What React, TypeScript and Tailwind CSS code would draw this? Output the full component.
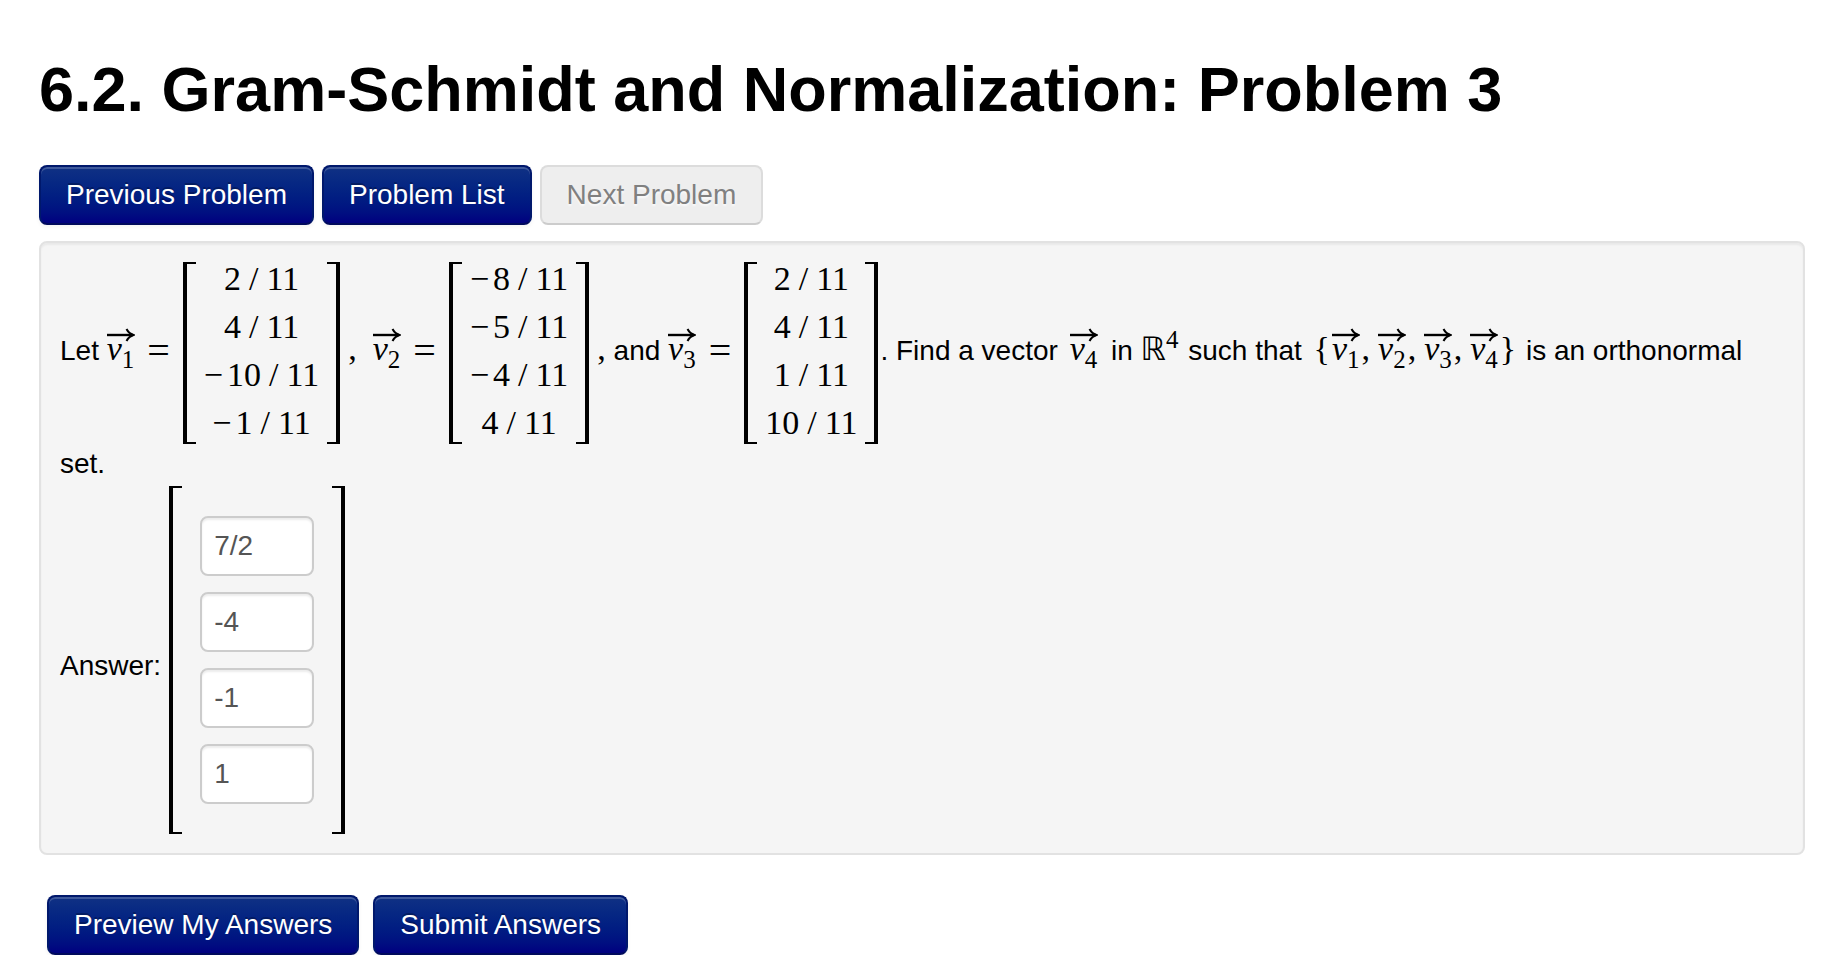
import { Fragment, type ReactNode } from "react";
import clsx from "clsx";

const v1 = ["2/11", "4/11", "−10/11", "−1/11"];
const v2 = ["−8/11", "−5/11", "−4/11", "4/11"];
const v3 = ["2/11", "4/11", "1/11", "10/11"];
const answers = ["7/2", "-4", "-1", "1"];

const btn = "inline-block rounded-lg border-2 px-[25px] py-2 text-[28px] leading-10";
const btnPrimary =
  "border-[#00186c] border-b-[#000a5c] bg-linear-to-b from-[#103184] to-[#000080] text-white shadow-[inset_0_2px_0_rgba(255,255,255,0.2),0_2px_4px_rgba(0,0,0,0.05)] text-shadow-[0_-2px_0_rgba(0,0,0,0.25)]";
const btnDisabled =
  "border-[#dcdcdc] border-b-[#cccccc] bg-[#eeeeee] text-[#808080] text-shadow-[0_2px_2px_rgba(255,255,255,0.75)]";

function Bracketed({ children, className }: { children: ReactNode; className?: string }) {
  return (
    <span className="inline-flex items-stretch align-middle">
      <span className="w-[13px] border-y-2 border-l-4 border-black" />
      <span className={clsx("flex flex-col items-center", className)}>{children}</span>
      <span className="w-[13px] border-y-2 border-r-4 border-black" />
    </span>
  );
}

function Matrix({ rows }: { rows: string[] }) {
  return (
    <Bracketed className="gap-[14px] px-2 pb-1 font-['Liberation_Serif',serif] text-[34px] leading-[34px]">
      {rows.map((row, i) => {
        const [top, bottom] = row.split("/");
        const negative = top.startsWith("−");
        return (
          <span key={i} className="whitespace-nowrap">
            {negative && <span className="mr-1">−</span>}
            {negative ? top.slice(1) : top}
            <span className="mx-2">/</span>
            {bottom}
          </span>
        );
      })}
    </Bracketed>
  );
}

function Vec({ n }: { n: number }) {
  return (
    <span className="relative inline-block font-['Liberation_Serif',serif] text-[34px] leading-none">
      <svg
        className="absolute -top-1 left-0 h-[14px] w-7"
        viewBox="0 0 28 14"
        fill="none"
        stroke="black"
        strokeWidth="2.4"
      >
        <path d="M0 7H26" />
        <path d="M19.5 1C21 4 23.500 6 26.500 7C23.500 8 21 10 19.500 13" strokeWidth="2" />
      </svg>
      <i>v</i>
      <span className="relative top-2 text-[25px] leading-none">{n}</span>
    </span>
  );
}

function Sym({ children, className }: { children: ReactNode; className?: string }) {
  return (
    <span className={clsx("font-['Liberation_Serif',serif] text-[34px] leading-none", className)}>
      {children}
    </span>
  );
}

function Equals() {
  return (
    <span className="mx-[13px] inline-block translate-y-1 font-['Liberation_Serif',serif] text-[40px] leading-none">
      =
    </span>
  );
}

export default function App() {
  return (
    <main className="bg-white pt-[49px] pr-5 pl-[39px] font-['Liberation_Sans',Arial,sans-serif] text-[28px] leading-10 text-black">
      <h1 className="text-[63px] leading-[80px] font-bold">
        6.2. Gram-Schmidt and Normalization: Problem 3
      </h1>

      <nav className="mt-9 flex gap-2">
        <a href="#previous" className={clsx(btn, btnPrimary)}>Previous Problem</a>
        <a href="#list" className={clsx(btn, btnPrimary)}>Problem List</a>
        <button type="button" disabled className={clsx(btn, btnDisabled)}>Next Problem</button>
      </nav>

      <form>
        <section className="mt-4 rounded-lg border-2 border-[#e2e2e2] bg-[#f5f5f5] p-[19px] shadow-[inset_0_2px_2px_rgba(0,0,0,0.05)]">
          <div>
            <span>Let </span>
            <Vec n={1} />
            <Equals />
            <Matrix rows={v1} />
            <Sym className="mr-4 ml-2">,</Sym>
            <Vec n={2} />
            <Equals />
            <Matrix rows={v2} />
            <Sym className="ml-2">,</Sym>
            <span> and </span>
            <Vec n={3} />
            <Equals />
            <Matrix rows={v3} />
            <span className="mr-1 ml-[2px]">. Find a vector </span>
            <Vec n={4} />
            <span className="ml-[6px]"> in </span>
            <span className="font-['DejaVu_Sans',sans-serif] text-[32px] leading-none">ℝ</span>
            <sup className="relative -top-3 align-baseline font-['Liberation_Serif',serif] text-[25px] leading-none">4</sup>
            <span className="mr-1 ml-[2px]"> such that </span>
            <Sym className="mr-[2px]">{"{"}</Sym>
            {[1, 2, 3, 4].map((n) => (
              <Fragment key={n}>
                <Vec n={n} />
                {n < 4 && <Sym className="mr-2 ml-[2px]">,</Sym>}
              </Fragment>
            ))}
            <Sym className="mx-[2px]">{"}"}</Sym>
            <span> is an orthonormal</span> <span>set.</span>
          </div>

          <div className="flex items-center pt-[2px]">
            <label id="answer-label" htmlFor="answer-0" className="mr-2 pt-3">Answer:</label>
            <Bracketed className="gap-4 px-[18px] py-[30px]">
              {answers.map((answer, i) => (
                <input
                  key={i}
                  id={`answer-${i}`}
                  type="text"
                  aria-labelledby="answer-label"
                  defaultValue={answer}
                  className="h-15 w-[114px] rounded-lg border-2 border-[#cccccc] bg-white px-3 text-[#555555] shadow-[inset_0_2px_2px_rgba(0,0,0,0.075)]"
                />
              ))}
            </Bracketed>
          </div>
        </section>

        <div className="mt-10 flex gap-[14px] pl-2">
          <button type="button" className={clsx(btn, btnPrimary)}>Preview My Answers</button>
          <button type="submit" className={clsx(btn, btnPrimary)}>Submit Answers</button>
        </div>
      </form>
    </main>
  );
}
